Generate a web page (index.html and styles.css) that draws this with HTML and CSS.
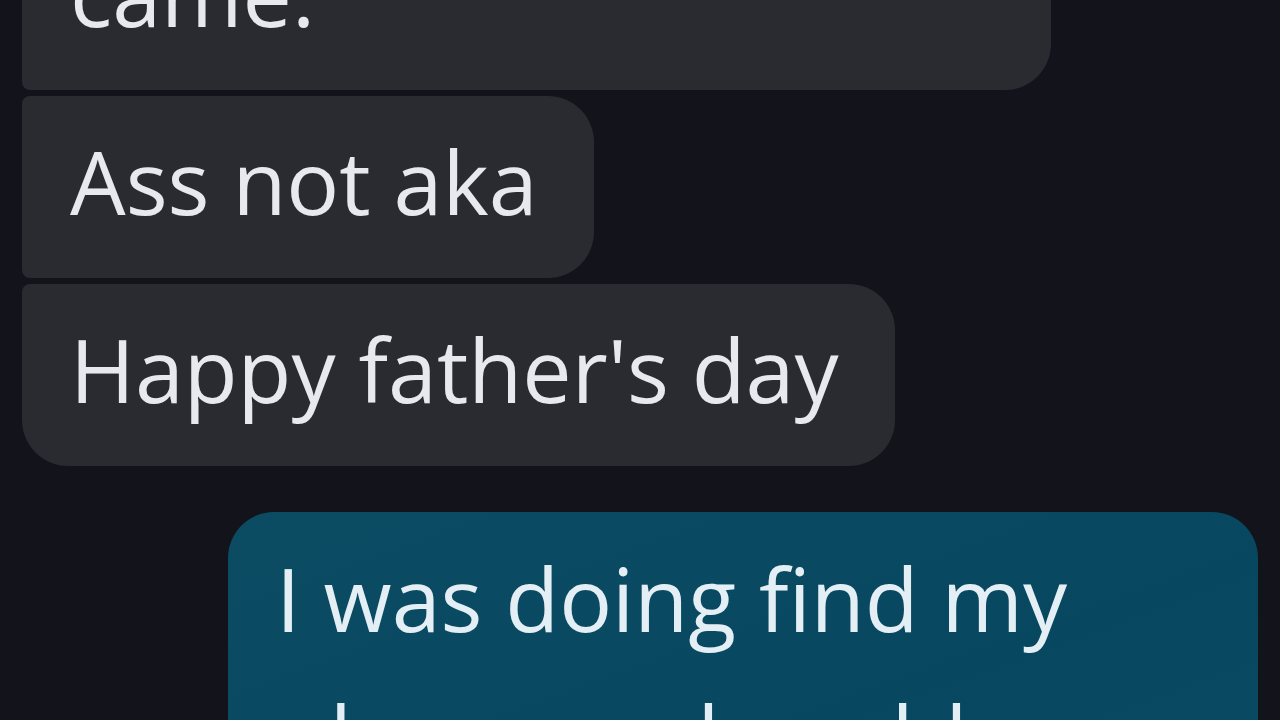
FILE: index.html
```html
<!DOCTYPE html>
<html lang="en">
<head>
<meta charset="utf-8">
<title>Messages</title>
<link rel="stylesheet" href="styles.css">
</head>
<body>
<main class="thread">
  <div class="bubble in first wide">came.</div>
  <div class="bubble in mid">Ass not aka</div>
  <div class="bubble in last">Happy father's day</div>
  <div class="bubble out">I was doing find my phone and could</div>
</main>
</body>
</html>
```
FILE: styles.css
```css
html, body {
  margin: 0;
  padding: 0;
  background: #12131b;
  height: 100%;
  overflow: hidden;
}
.thread {
  display: flex;
  flex-direction: column;
  align-items: flex-start;
  padding: 0 22px;
  margin-top: -92px;
  font-family: "Open Sans", "Noto Sans", sans-serif;
  font-size: 88px;
  line-height: 104px;
  color: #e8e9ee;
}
.bubble {
  box-sizing: border-box;
  padding: 33px 56px 45px 48px;
  height: 182px;
  white-space: nowrap;
}
.in {
  background: #2a2b30;
  margin-bottom: 6px;
}
.first { border-radius: 46px 46px 46px 8px; }
.mid { border-radius: 8px 46px 46px 8px; }
.last { border-radius: 8px 46px 46px 46px; margin-bottom: 46px; }
.wide { width: 1029px; }
.out {
  align-self: flex-end;
  width: 1030px;
  height: auto;
  white-space: normal;
  background: linear-gradient(160deg, #0b4c63 0%, #084760 60%, #0a4b62 100%);
  color: #e3eff4;
  border-radius: 46px 46px 8px 46px;
  padding: 17px 60px 39px 48px;
  line-height: 138px;
}
```
